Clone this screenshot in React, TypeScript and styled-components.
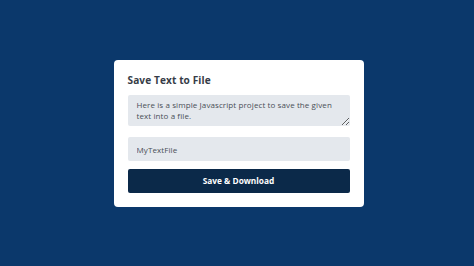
import React, { useState } from 'react';
import styled, { createGlobalStyle } from 'styled-components';

const GlobalStyle = createGlobalStyle`
  html, body {
    margin: 0;
    padding: 0;
    height: 100%;
    background: #0b386b;
    font-family: 'Open Sans', 'Noto Sans', sans-serif;
  }
  #root {
    height: 100%;
  }
`;

const Page = styled.main`
  height: 100vh;
  display: flex;
  align-items: center;
  justify-content: center;
  padding-left: 3px;
  box-sizing: border-box;
`;

const Card = styled.div`
  width: 250px;
  box-sizing: border-box;
  background: #ffffff;
  border-radius: 4px;
  padding: 13px 14px 14px;
  display: flex;
  flex-direction: column;
`;

const Title = styled.h1`
  margin: 0 0 8px;
  font-size: 10.1px;
  line-height: 14px;
  font-weight: 700;
  color: #363c47;
  letter-spacing: 0.1px;
`;

const TextArea = styled.textarea`
  height: 31px;
  box-sizing: border-box;
  margin: 0 0 11px;
  padding: 4px 9px 0;
  border: none;
  border-radius: 2px;
  background: #e4e8ed;
  font-family: inherit;
  font-size: 8px;
  letter-spacing: 0.1px;
  line-height: 11.5px;
  color: #4a4f57;
  resize: vertical;
  outline: none;
  overflow: hidden;
`;

const TextInput = styled.input`
  height: 24px;
  box-sizing: border-box;
  margin: 0 0 8px;
  padding: 2px 9px 0;
  border: none;
  border-radius: 2px;
  background: #e4e8ed;
  font-family: inherit;
  font-size: 8px;
  letter-spacing: 0.1px;
  color: #4a4f57;
  outline: none;
`;

const Button = styled.button`
  height: 24px;
  border: none;
  border-radius: 2px;
  background: #0b2949;
  color: #ffffff;
  font-family: inherit;
  font-size: 8.3px;
  font-weight: 700;
  cursor: pointer;
`;

export default function App() {
  const [text, setText] = useState(
    'Here is a simple Javascript project to save the given text into a file.'
  );
  const [name, setName] = useState('MyTextFile');

  const download = () => {
    const blob = new Blob([text], { type: 'text/plain' });
    const a = document.createElement('a');
    a.href = URL.createObjectURL(blob);
    a.download = name;
    a.click();
  };

  return (
    <>
      <GlobalStyle />
      <Page>
        <Card>
          <Title>Save Text to File</Title>
          <TextArea value={text} onChange={(e) => setText(e.target.value)} />
          <TextInput value={name} onChange={(e) => setName(e.target.value)} />
          <Button onClick={download}>Save &amp; Download</Button>
        </Card>
      </Page>
    </>
  );
}
